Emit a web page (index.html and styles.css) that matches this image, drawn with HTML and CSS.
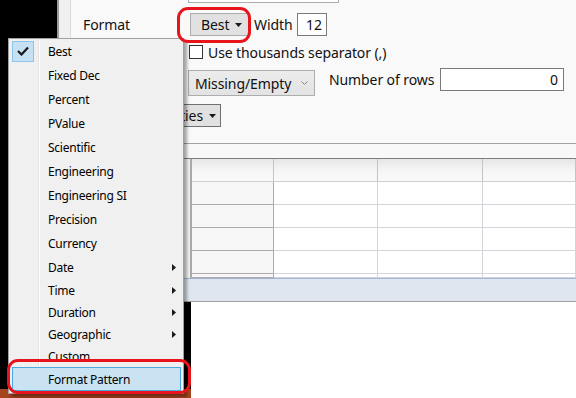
FILE: index.html
```html
<!DOCTYPE html>
<html lang="en">
<head>
    <meta charset="UTF-8">
    <title>Column Info - Format</title>
    <link rel="stylesheet" href="styles.css">
</head>
<body>
    <div class="top-row">
        <div class="desk"></div>
        <div class="window">
            <div class="win-edge"></div>
            <div class="win-side"></div>
            <div class="win-main">
                <div class="form">
                    <div class="cut-field"></div>
                    <div class="row row-format">
                        <span class="label">Format</span>
                        <div class="btn btn-best">Best<svg class="drop" width="7" height="4" viewBox="0 0 7 4"><polygon points="0,0 7,0 3.5,4" fill="#1a1a1a"/></svg></div>
                        <span class="width-label">Width</span>
                        <div class="input input-width">12</div>
                    </div>
                    <div class="row row-check">
                        <span class="check"></span>
                        <span>Use thousands separator (,)</span>
                    </div>
                    <div class="row row-missing">
                        <div class="select">Missing/Empty<svg class="chev" width="7" height="5" viewBox="0 0 7 5"><polyline points="0.5,0.5 3.5,3.5 6.5,0.5" fill="none" stroke="#8a8a8a" stroke-width="1"/></svg></div>
                        <span class="rows-label">Number of rows</span>
                        <div class="input input-rows">0</div>
                    </div>
                    <div class="row row-props">
                        <div class="btn btn-props"><span class="props-text">Column Properties</span><svg class="drop" width="7" height="4" viewBox="0 0 7 4"><polygon points="0,0 7,0 3.5,4" fill="#1a1a1a"/></svg></div>
                    </div>
                </div>
                <div class="strip"></div>
                <div class="grid-area">
                    <div class="grid-gap"></div>
                    <div class="grid">
                        <div class="cell hd rh"></div><div class="cell hd"></div><div class="cell hd"></div><div class="cell hd"></div>
                        <div class="cell rh"></div><div class="cell"></div><div class="cell"></div><div class="cell"></div>
                        <div class="cell rh"></div><div class="cell"></div><div class="cell"></div><div class="cell"></div>
                        <div class="cell rh"></div><div class="cell"></div><div class="cell"></div><div class="cell"></div>
                        <div class="cell rh"></div><div class="cell"></div><div class="cell"></div><div class="cell"></div>
                        <div class="cell rh"></div><div class="cell"></div><div class="cell"></div><div class="cell"></div>
                    </div>
                </div>
                <div class="status"></div>
            </div>
        </div>
    </div>
    <div class="bottom-row">
        <div class="desk-low">
            <div class="taskbar">
                <svg width="9" height="8" viewBox="0 0 9 8"><circle cx="4.5" cy="5" r="3.2" fill="none" stroke="#f3ddd2" stroke-width="1.2"/></svg>
            </div>
        </div>
        <div class="doc"></div>
    </div>

    <ul class="menu">
        <li><span class="ico on"><svg width="12" height="10" viewBox="0 0 12 10"><polyline points="1,5 4.5,8.5 11,1.5" fill="none" stroke="#1a1a1a" stroke-width="2.2"/></svg></span>Best</li>
        <li><span class="ico"></span>Fixed Dec</li>
        <li><span class="ico"></span>Percent</li>
        <li><span class="ico"></span>PValue</li>
        <li><span class="ico"></span>Scientific</li>
        <li><span class="ico"></span>Engineering</li>
        <li><span class="ico"></span>Engineering SI</li>
        <li><span class="ico"></span>Precision</li>
        <li><span class="ico"></span>Currency</li>
        <li><span class="ico"></span>Date<svg class="sub" width="4" height="7" viewBox="0 0 4 7"><polygon points="0,0 4,3.5 0,7" fill="#1a1a1a"/></svg></li>
        <li class="short"><span class="ico"></span>Time<svg class="sub" width="4" height="7" viewBox="0 0 4 7"><polygon points="0,0 4,3.5 0,7" fill="#1a1a1a"/></svg></li>
        <li class="short"><span class="ico"></span>Duration<svg class="sub" width="4" height="7" viewBox="0 0 4 7"><polygon points="0,0 4,3.5 0,7" fill="#1a1a1a"/></svg></li>
        <li class="short"><span class="ico"></span>Geographic<svg class="sub" width="4" height="7" viewBox="0 0 4 7"><polygon points="0,0 4,3.5 0,7" fill="#1a1a1a"/></svg></li>
        <li class="short"><span class="ico"></span>Custom</li>
        <li class="hi"><span class="ico"></span>Format Pattern</li>
    </ul>

    <div class="mark mark-best"></div>
    <div class="mark mark-pattern"></div>
</body>
</html>
```

FILE: styles.css
```css
body {
    margin: 0;
    width: 576px;
    height: 398px;
    overflow: hidden;
    position: relative;
    background: #000;
    font-family: 'Noto Sans', 'Open Sans', Arial, sans-serif;
    color: #111;
}
.top-row {
    display: flex;
    height: 302px;
}
.desk {
    width: 57px;
    background: #000;
}
.window {
    flex: 1;
    display: flex;
    background: #f9f9f9;
}
.win-edge {
    width: 2px;
    background: #9c9c9c;
}
.win-side {
    width: 11px;
    background: #f0f0f0;
    border-right: 1px solid #dcdcdc;
}
.win-main {
    flex: 1;
    min-width: 0;
    display: flex;
    flex-direction: column;
}
.form {
    height: 144px;
    box-sizing: border-box;
    border-bottom: 1px solid #a3a3a3;
    padding-left: 12px;
    font-size: 14px;
    letter-spacing: -0.1px;
}
.cut-field {
    margin-left: 105px;
    width: 149px;
    height: 2px;
    border: 1px solid #adadad;
    border-top: 0;
    background: #fff;
}
.row {
    display: flex;
    align-items: center;
}
.row-format {
    margin-top: 10px;
    height: 23px;
}
.label {
    width: 107px;
}
.btn {
    height: 23px;
    box-sizing: border-box;
    border: 1px solid #adadad;
    background: #e1e1e1;
    display: flex;
    align-items: center;
    white-space: nowrap;
}
.drop {
    flex: none;
    margin-left: 6px;
}
.btn-best {
    width: 60px;
    padding-left: 10px;
}
.width-label {
    width: 43px;
    margin-left: 4px;
}
.input {
    height: 23px;
    box-sizing: border-box;
    border: 1px solid #7a7a7a;
    background: #fff;
    display: flex;
    align-items: center;
}
.input-width {
    width: 30px;
    padding-left: 8px;
}
.row-check {
    margin-top: 7px;
    height: 18px;
    padding-left: 106px;
}
.check {
    width: 14px;
    height: 14px;
    box-sizing: border-box;
    border: 1px solid #333;
    background: #fff;
    margin-right: 5px;
}
.row-missing {
    margin-top: 7px;
    height: 28px;
    align-items: flex-start;
    padding-left: 105px;
}
.select {
    margin-top: 2px;
    width: 127px;
    height: 26px;
    box-sizing: border-box;
    border: 1px solid #adadad;
    background: linear-gradient(#ececec, #e3e3e3);
    padding-left: 6px;
    display: flex;
    align-items: center;
}
.chev {
    margin-left: auto;
    margin-right: 6px;
}
.rows-label {
    width: 111px;
    margin-left: 14px;
    line-height: 23px;
}
.input-rows {
    width: 124px;
    justify-content: flex-end;
    padding-right: 5px;
}
.row-props {
    margin-top: 8px;
    height: 23px;
}
.btn-props {
    width: 140px;
    margin-left: -2px;
    justify-content: flex-end;
    padding-right: 4px;
    border-color: #707070;
    overflow: hidden;
}
.props-text {
    flex: none;
}
.strip {
    height: 15px;
    box-sizing: border-box;
    background: #f8f8f8;
    border-bottom: 1px solid #7d7d7d;
}
.grid-area {
    display: flex;
    height: 119px;
}
.grid-gap {
    width: 119px;
    background: #f3f3f3;
}
.grid {
    flex: 1;
    border-left: 2px solid #a9a9a9;
    display: grid;
    grid-template-columns: 82px 104px 105px 1fr;
    grid-template-rows: repeat(5, 23px) 1fr;
    overflow: hidden;
}
.cell {
    box-sizing: border-box;
    background: #fff;
    border-right: 1px solid #d4d4dc;
    border-bottom: 1px solid #d4d4dc;
}
.cell.rh {
    background: #f7f7f7;
    border-color: #ababab;
}
.cell.hd {
    background: linear-gradient(#e6e6e6, #f6f6f6 55%, #fafafa);
    border-right-color: #c4c4c4;
    border-bottom-color: #cfcfcf;
}
.status {
    height: 24px;
    box-sizing: border-box;
    background: #dfe6ef;
    border-top: 1px solid #a6b2d3;
    border-bottom: 1px solid #9f9f9f;
}
.bottom-row {
    display: flex;
    height: 96px;
}
.desk-low {
    width: 191px;
    background: #000;
    display: flex;
    flex-direction: column;
    justify-content: flex-end;
}
.taskbar {
    height: 9px;
    background: #a5441f;
    padding-left: 3px;
}
.doc {
    flex: 1;
    background: #fff;
}
.menu {
    position: absolute;
    left: 8px;
    top: 38px;
    width: 176px;
    height: 356px;
    box-sizing: border-box;
    margin: 0;
    padding: 0;
    list-style: none;
    border: 1px solid #a0a0a0;
    background: linear-gradient(to right, #f0f0f0 29px, #e2e2e2 29px 30px, #fff 30px 31px, #f0f0f0 31px);
    box-shadow: 3px 3px 3px rgba(0,0,0,0.35);
    font-size: 12px;
    letter-spacing: -0.25px;
    color: #000;
}
.menu li {
    display: flex;
    align-items: center;
    height: 24px;
    margin: 0 2px 0 3px;
    box-sizing: border-box;
    border: 1px solid transparent;
}
.menu li.short {
    height: 22px;
}
.menu li.hi {
    background: #c9e3f3;
    border-color: #4ea6e0;
}
.ico {
    flex: none;
    width: 22px;
    height: 21px;
    margin-left: -1px;
    margin-right: 14px;
    box-sizing: border-box;
    display: flex;
    align-items: center;
    justify-content: center;
}
.ico.on {
    background: #c5e1f3;
    border: 1px solid #8cc4ec;
}
.sub {
    margin-left: auto;
    margin-right: 4px;
}
.mark {
    position: absolute;
    box-sizing: border-box;
    border: 3px solid #e8141c;
    border-radius: 11px;
}
.mark-best {
    left: 177px;
    top: 7px;
    width: 74px;
    height: 36px;
}
.mark-pattern {
    left: 7px;
    top: 359px;
    width: 184px;
    height: 35px;
}
```
